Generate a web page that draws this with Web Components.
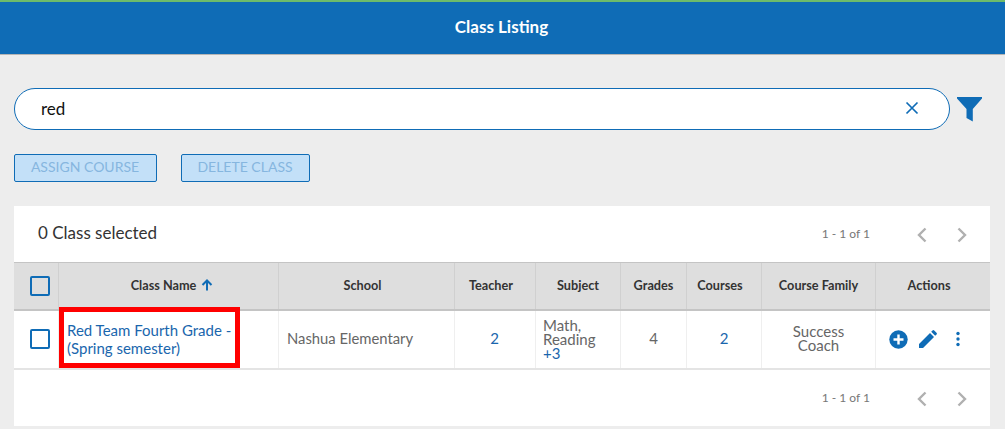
<!DOCTYPE html>
<html>
<head>
<meta charset="utf-8">
<title>Class Listing</title>
<style>
    html, body { margin: 0; padding: 0; background: #ededed; font-family: Lato, sans-serif; }
    body { height: 429px; overflow: hidden; }
</style>
</head>
<body>
<app-header>Class Listing</app-header>
<search-bar value="red"></search-bar>
<div style="display:flex;gap:24px;padding:24px 0 0 14px">
    <action-button style="width:143px">ASSIGN COURSE</action-button>
    <action-button style="width:129px">DELETE CLASS</action-button>
</div>
<class-card></class-card>

<script>
class AppHeader extends HTMLElement {
    constructor() {
        super();
        this.attachShadow({mode: 'open'});
        this.shadowRoot.innerHTML = `
            <style>
                :host {
                    display: flex;
                    align-items: center;
                    justify-content: center;
                    box-sizing: border-box;
                    height: 55px;
                    padding: 0 2px 3px 0;
                    background: #0f6cb6;
                    border-top: 2px solid #6dbb6a;
                    border-bottom: 1px solid #b5b5b5;
                    color: #fff;
                    font: bold 17px Lato, sans-serif;
                }
            </style>
            <slot></slot>
        `;
    }
}

class SearchBar extends HTMLElement {
    constructor() {
        super();
        this.attachShadow({mode: 'open'});
        this.shadowRoot.innerHTML = `
            <style>
                :host {
                    display: flex;
                    align-items: center;
                    gap: 7px;
                    padding: 33px 0 0 14px;
                }
                #box {
                    box-sizing: border-box;
                    width: 936px;
                    height: 42px;
                    display: flex;
                    align-items: center;
                    justify-content: space-between;
                    padding: 0 30px 2px 26px;
                    background: #fff;
                    border: 1px solid #0f6cb6;
                    border-radius: 21px;
                    color: #111;
                    font: 17px Lato, sans-serif;
                }
                svg { display: block; }
            </style>
            <div id="box">
                <span id="text"></span>
                <svg width="14" height="14" viewBox="0 0 14 14"><path d="M1.500 1.500l11 11M12.500 1.500l-11 11" stroke="#0f6cb6" stroke-width="1.700" fill="none"/></svg>
            </div>
            <svg width="25" height="25" viewBox="0 0 25 25"><path d="M0 0h25v1.500L15.800 12v12.500L9.500 21V12L0 1.500z" fill="#0f6cb6"/></svg>
        `;
    }

    connectedCallback() {
        this.shadowRoot.querySelector('#text').textContent = this.getAttribute('value');
    }
}

class ActionButton extends HTMLElement {
    constructor() {
        super();
        this.attachShadow({mode: 'open'});
        this.shadowRoot.innerHTML = `
            <style>
                :host {
                    display: flex;
                    align-items: center;
                    justify-content: center;
                    box-sizing: border-box;
                    height: 28px;
                    padding: 0 1px 3px 0;
                    background: #c3e0f8;
                    border: 1px solid #0f6cb6;
                    border-radius: 2px;
                    color: #86b6df;
                    font: 14px Lato, sans-serif;
                }
            </style>
            <slot></slot>
        `;
    }
}

class CheckBox extends HTMLElement {
    constructor() {
        super();
        this.attachShadow({mode: 'open'});
        this.shadowRoot.innerHTML = `
            <style>
                :host {
                    display: block;
                    box-sizing: border-box;
                    width: 20px;
                    height: 20px;
                    border: 2px solid #0f6cb6;
                    border-radius: 2px;
                }
            </style>
        `;
    }
}

class PagerRow extends HTMLElement {
    constructor() {
        super();
        this.attachShadow({mode: 'open'});
        this.shadowRoot.innerHTML = `
            <style>
                :host {
                    display: flex;
                    align-items: center;
                    padding: 0 23px 0 24px;
                    color: #333;
                    font: 17px Lato, sans-serif;
                }
                #label { margin-bottom: 3px; }
                #right {
                    display: flex;
                    align-items: center;
                    margin-left: auto;
                    color: #777;
                    font-size: 12px;
                }
                #range { margin: 0 47px 2px 0; }
                svg { display: block; margin-top: 2px; }
                svg + svg { margin-left: 30px; }
            </style>
            <span id="label"><slot></slot></span>
            <div id="right">
                <span id="range">1 - 1 of 1</span>
                <svg width="10" height="16" viewBox="0 0 10 16"><path d="M8.500 1.500L2 8l6.500 6.500" stroke="#b0b0b0" stroke-width="2.400" fill="none"/></svg>
                <svg width="10" height="16" viewBox="0 0 10 16"><path d="M1.500 1.500L8 8l-6.500 6.500" stroke="#b0b0b0" stroke-width="2.400" fill="none"/></svg>
            </div>
        `;
    }
}

class ClassCard extends HTMLElement {
    constructor() {
        super();
        this.attachShadow({mode: 'open'});
        this.shadowRoot.innerHTML = `
            <style>
                :host {
                    display: block;
                    position: relative;
                    box-sizing: border-box;
                    width: 976px;
                    margin: 24px 0 0 14px;
                    background: #fff;
                }
                pager-row { height: 56px; }
                .row {
                    display: grid;
                    grid-template-columns: 45px 220px 176px 81px 85px 66px 75px 114px 114px;
                }
                .head {
                    height: 49px;
                    box-sizing: border-box;
                    background: #dedede;
                    border-top: 1px solid #c4c4c4;
                    border-bottom: 2px solid #c4c4c4;
                    color: #333;
                    font: bold 12.700px Lato, sans-serif;
                }
                .body {
                    height: 59px;
                    box-sizing: border-box;
                    border-bottom: 2px solid #e4e4e4;
                    color: #666;
                    font: 15px/14px Lato, sans-serif;
                }
                .row > div {
                    display: flex;
                    align-items: center;
                    justify-content: center;
                    text-align: center;
                    padding-bottom: 3px;
                    border-right: 1px solid #d0d0d0;
                }
                .body > div { border-right-color: #efefef; }
                .row > div:last-child { border-right: 0; }
                .row > .box { justify-content: flex-start; padding: 0 0 0 16px; }
                .body > .box, .body > .actions, .body > .subject { padding-bottom: 1px; }
                .body > .left { justify-content: flex-start; text-align: left; padding-left: 7px; }
                .arrow { margin-left: 5px; }
                .push-right { padding-left: 7px; }
                .push-left { padding-right: 8px; }
                a { color: #1a66ad; text-decoration: none; }
                .body > .name { line-height: 18px; padding: 0 0 2px 8px; }
                .body > .school { font-size: 14.800px; padding-left: 8px; }
                .body > .actions { justify-content: flex-start; padding-left: 13px; gap: 11px; }
                .shift { padding-right: 1px; }
                .dots { margin-left: 3px; }
                svg { display: block; }
                #mark {
                    position: absolute;
                    left: 45px;
                    top: 101px;
                    box-sizing: border-box;
                    width: 181px;
                    height: 61px;
                    border: 5px solid #f00;
                }
            </style>
            <pager-row>0 Class selected</pager-row>
            <div class="row head">
                <div class="box"><check-box></check-box></div>
                <div class="push-right">Class Name<svg class="arrow" width="12" height="12" viewBox="0 0 12 12"><path d="M6 11.500V1.500M1.500 6L6 1.500 10.500 6" stroke="#0f6cb6" stroke-width="2" fill="none"/></svg></div>
                <div class="push-left">School</div>
                <div class="push-left">Teacher</div>
                <div>Subject</div>
                <div>Grades</div>
                <div class="push-left">Courses</div>
                <div>Course Family</div>
                <div class="push-left">Actions</div>
            </div>
            <div class="row body">
                <div class="box"><check-box></check-box></div>
                <div class="left name"><a>Red Team Fourth Grade -<br>(Spring semester)</a></div>
                <div class="left school">Nashua Elementary</div>
                <div class="shift"><a>2</a></div>
                <div class="left subject"><span>Math,<br>Reading<br><a>+3</a></span></div>
                <div>4</div>
                <div><a>2</a></div>
                <div>Success<br>Coach</div>
                <div class="actions">
                    <svg width="19" height="19" viewBox="0 0 19 19"><circle cx="9.500" cy="9.500" r="9.200" fill="#0f6cb6"/><path d="M9.500 4.500v10M4.500 9.500h10" stroke="#fff" stroke-width="2.400"/></svg>
                    <svg width="18" height="18" viewBox="0 0 18 18"><path d="M0 18v-4L11 3l4 4L4 18zM12.200 1.800l1.300-1.300a1.200 1.200 0 0 1 1.700 0l2.300 2.300a1.200 1.200 0 0 1 0 1.700l-1.300 1.300z" fill="#0f6cb6"/></svg>
                    <svg class="dots" width="14" height="16" viewBox="0 0 14 16"><circle cx="7" cy="2.500" r="1.700" fill="#0f6cb6"/><circle cx="7" cy="8" r="1.700" fill="#0f6cb6"/><circle cx="7" cy="13.500" r="1.700" fill="#0f6cb6"/></svg>
                </div>
            </div>
            <pager-row></pager-row>
            <div id="mark"></div>
        `;
    }
}

customElements.define('app-header', AppHeader);
customElements.define('search-bar', SearchBar);
customElements.define('action-button', ActionButton);
customElements.define('check-box', CheckBox);
customElements.define('pager-row', PagerRow);
customElements.define('class-card', ClassCard);
</script>
</body>
</html>
